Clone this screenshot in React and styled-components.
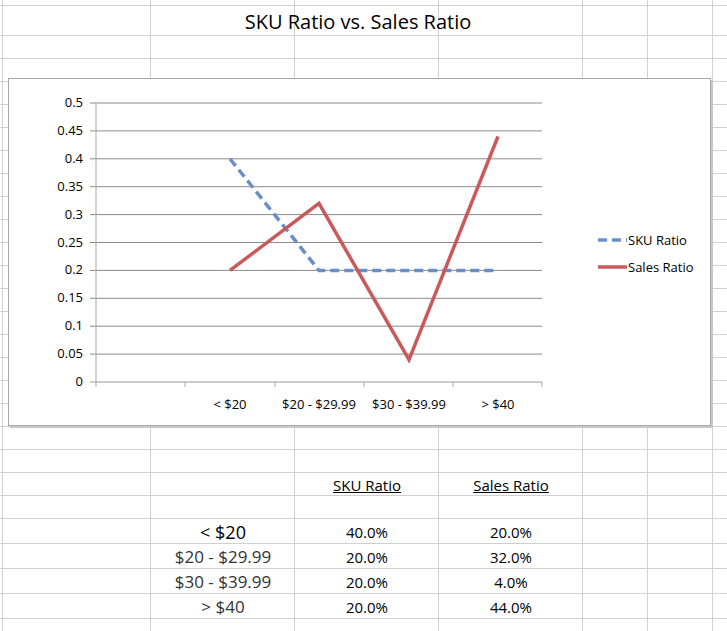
import React from "react";
import styled, { createGlobalStyle } from "styled-components";

const GlobalStyle = createGlobalStyle`
  body { margin: 0; background: #fff; font-family: "Open Sans", "Liberation Sans", sans-serif; color: #000; }
`;

const cols = [3, 148, 144, 144, 144, 65, 65, 20];
const rows = [6, 30, ...Array(17).fill(23), 23, 23, 23, 23, 25, 25, 25, 25, 25];

const Sheet = styled.div`
  position: relative;
  width: 727px;
  height: 631px;
  overflow: hidden;
  display: grid;
  grid-template-columns: ${cols.map((c) => c + "px").join(" ")};
  grid-template-rows: ${rows.map((r) => r + "px").join(" ")};
`;

const Cell = styled.div`
  border-right: 1px solid #d0d0d0;
  border-bottom: 1px solid #d0d0d0;
  box-sizing: border-box;
`;

const TextCell = styled.div`
  grid-column: ${(p) => p.$col};
  grid-row: ${(p) => p.$row};
  z-index: 1;
  display: flex;
  align-items: center;
  justify-content: center;
  font-size: ${(p) => p.$size || 15}px;
  text-decoration: ${(p) => (p.$u ? "underline" : "none")};
  padding-right: ${(p) => p.$pr || 0}px;
  white-space: nowrap;
`;

const ChartBox = styled.div`
  position: absolute;
  left: 8px;
  top: 78px;
  width: 701px;
  height: 346px;
  background: #fff;
  border: 1px solid #a8a8a8;
  box-shadow: 2px 2px 0 #c8c8c8;
  z-index: 2;
`;

const ox = 8, oy = 78;
const y0 = 381 - oy, yTop = 102 - oy;
const yv = (v) => y0 - (v / 0.5) * (y0 - yTop);
const xs = [229, 318, 408, 497].map((x) => x - ox);
const sku = [0.4, 0.2, 0.2, 0.2];
const sales = [0.2, 0.32, 0.04, 0.44];
const ticks = Array.from({ length: 11 }, (_, i) => i * 0.05);
const cats = ["< $20", "$20 - $29.99", "$30 - $39.99", "> $40"];

const Chart = () => (
  <ChartBox>
    <svg width="701" height="346" style={{ fontFamily: "'Open Sans', 'Liberation Sans', sans-serif" }}>
      {ticks.map((t, i) => (
        <g key={i}>
          <line x1={81} x2={533} y1={yv(t)} y2={yv(t)} stroke={i === 0 ? "#999" : "#8a8a8a"} strokeWidth="1" />
          <text x={74} y={yv(t) + 4} fontSize="13" textAnchor="end">
            {Number(t.toFixed(2)).toString()}
          </text>
        </g>
      ))}
      <line x1={87} x2={87} y1={yTop} y2={y0} stroke="#aaa" />
      {[87, 176, 266, 355, 444, 533].map((x) => (
        <line key={x} x1={x} x2={x} y1={y0} y2={y0 + 5} stroke="#aaa" />
      ))}
      {cats.map((c, i) => (
        <text key={c} x={xs[i]} y={y0 + 27} fontSize="13" textAnchor="middle">{c}</text>
      ))}
      <polyline points={xs.map((x, i) => `${x},${yv(sku[i])}`).join(" ")} fill="none" stroke="#6a8fc8" strokeWidth="3.5" strokeDasharray="9 5" />
      <polyline points={xs.map((x, i) => `${x},${yv(sales[i])}`).join(" ")} fill="none" stroke="#c85a5a" strokeWidth="3.5" strokeLinejoin="miter" />
      <line x1={589} x2={618} y1={161} y2={161} stroke="#6a8fc8" strokeWidth="3.5" strokeDasharray="9 5" />
      <text x={619} y={166} fontSize="13">SKU Ratio</text>
      <line x1={589} x2={618} y1={188} y2={188} stroke="#c85a5a" strokeWidth="3.5" />
      <text x={619} y={193} fontSize="13">Sales Ratio</text>
    </svg>
  </ChartBox>
);

const data = [
  ["< $20", "40.0%", "20.0%"],
  ["$20 - $29.99", "20.0%", "32.0%"],
  ["$30 - $39.99", "20.0%", "4.0%"],
  ["> $40", "20.0%", "44.0%"],
];

export default function App() {
  const cells = [];
  rows.forEach((_, r) => cols.forEach((_, c) => cells.push(<Cell key={`${r}-${c}`} style={{ gridRow: r + 1, gridColumn: c + 1 }} />)));
  return (
    <>
      <GlobalStyle />
      <Sheet>
        {cells}
        <TextCell $col="3 / 6" $row="2" $size={20} $pr={18}>SKU Ratio vs. Sales Ratio</TextCell>
        <TextCell $col="4" $row="22" $size={15} $u>SKU Ratio</TextCell>
        <TextCell $col="5" $row="22" $size={15} $u>Sales Ratio</TextCell>
        {data.map((d, i) => (
          <React.Fragment key={d[0]}>
            <TextCell $col="3" $row={24 + i} $size={i === 0 ? 18 : 17} style={{ color: i === 0 ? "#000" : "#333" }}>{d[0]}</TextCell>
            <TextCell $col="4" $row={24 + i} $size={15}>{d[1]}</TextCell>
            <TextCell $col="5" $row={24 + i} $size={15}>{d[2]}</TextCell>
          </React.Fragment>
        ))}
        <Chart />
      </Sheet>
    </>
  );
}
